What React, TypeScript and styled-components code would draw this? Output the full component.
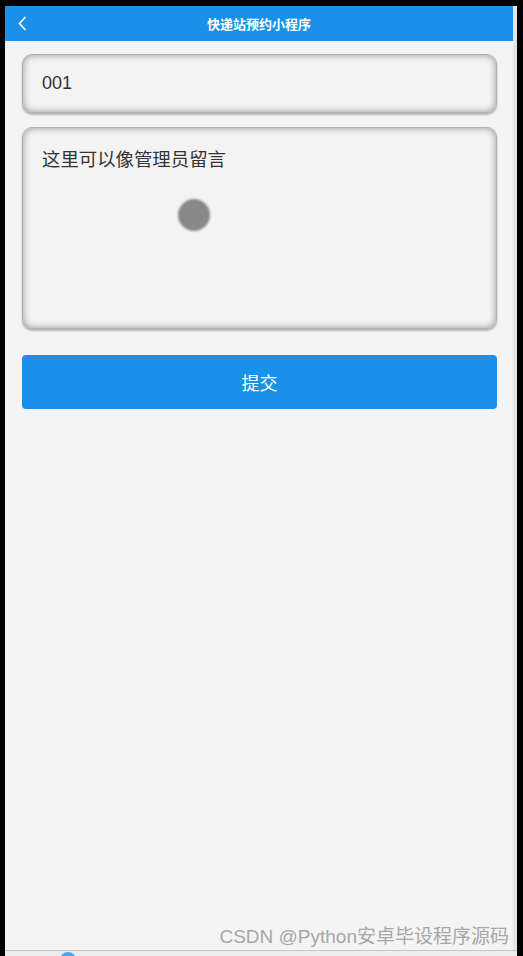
import React, { useState } from 'react'
import styled, { createGlobalStyle } from 'styled-components'

const GlobalStyle = createGlobalStyle`
    html, body {
        margin: 0;
        padding: 0;
        background: #000;
    }
    * {
        box-sizing: border-box;
    }
`

const Frame = styled.div`
    width: 523px;
    height: 956px;
    display: flex;
    flex-direction: column;
    padding: 6px 6px 0 5px;
    background: #000;
    font-family: "Liberation Sans", "Noto Sans CJK SC", sans-serif;
`

const Device = styled.div`
    flex: 1;
    display: flex;
    min-height: 0;
`

const Screen = styled.div`
    position: relative;
    flex: 1;
    display: flex;
    flex-direction: column;
    background: #f4f4f4;
`

const ScrollStrip = styled.div`
    width: 4px;
    background: #e4e4e4;
`

const Header = styled.div`
    height: 35px;
    display: flex;
    align-items: center;
    justify-content: center;
    position: relative;
    background: #1a91e8;
    color: #fff;
    font-size: 13px;
    font-weight: bold;
`

const BackButton = styled.button`
    position: absolute;
    left: 9px;
    top: 8px;
    width: 16px;
    height: 18px;
    padding: 0;
    border: none;
    background: transparent;
    display: flex;
    align-items: center;
    justify-content: center;
`

const Form = styled.form`
    display: flex;
    flex-direction: column;
    padding: 13px 16px 0 17px;
`

const Field = styled.div<{ $tall?: boolean }>`
    position: relative;
    height: ${p => (p.$tall ? '202px' : '59px')};
    margin-bottom: ${p => (p.$tall ? '26px' : '14px')};
    border: 1px solid #b0b0b0;
    border-radius: 10px;
    background: #f3f3f3;
    box-shadow: inset 0 0 7px rgba(0, 0, 0, 0.4), 0 2px 2px rgba(0, 0, 0, 0.25);
    display: flex;
`

const TextInput = styled.input`
    flex: 1;
    border: none;
    outline: none;
    background: transparent;
    padding: 0 19px;
    font-family: "Liberation Sans", sans-serif;
    font-size: 18px;
    color: #333;
`

const Message = styled.textarea`
    flex: 1;
    border: none;
    outline: none;
    resize: none;
    background: transparent;
    padding: 18px 19px;
    font-family: "Noto Sans CJK SC", sans-serif;
    font-size: 18.4px;
    line-height: 24px;
    color: #333;
`

const TouchDot = styled.div`
    position: absolute;
    left: 155px;
    top: 71px;
    width: 32px;
    height: 32px;
    border-radius: 50%;
    background: #888;
    filter: blur(1.2px);
    pointer-events: none;
`

const Submit = styled.button`
    height: 54px;
    border: none;
    border-radius: 4px;
    background: #1a91e8;
    color: #fff;
    font-family: "Noto Sans CJK SC", sans-serif;
    font-size: 18px;
`

const Watermark = styled.div`
    position: absolute;
    right: 4px;
    bottom: 2px;
    font-family: "Liberation Sans", "Noto Sans CJK SC", sans-serif;
    font-size: 19px;
    color: #a6a6a6;
    white-space: nowrap;
`

const Taskbar = styled.div`
    position: relative;
    height: 6px;
    border-top: 1px solid #c8c8c8;
    background: #ededed;
    overflow: hidden;
`

const TaskDot = styled.div`
    position: absolute;
    left: 55px;
    top: 1px;
    width: 16px;
    height: 16px;
    border-radius: 50%;
    background: #4aa3e6;
`

const App: React.FunctionComponent = () => {
    const [code, setCode] = useState('001')
    const [note, setNote] = useState('这里可以像管理员留言')

    const handleSubmit = (event: React.FormEvent<HTMLFormElement>) => {
        event.preventDefault()
    }

    return (
        <Frame>
            <GlobalStyle />
            <Device>
                <Screen>
                    <Header>
                        <BackButton type="button">
                            <svg width="9" height="15" viewBox="0 0 9 15">
                                <path d="M7.5 1 L1.5 7.5 L7.5 14" fill="none" stroke="#fff" strokeWidth="1.6" />
                            </svg>
                        </BackButton>
                        快递站预约小程序
                    </Header>
                    <Form onSubmit={handleSubmit}>
                        <Field>
                            <TextInput value={code} onChange={e => setCode(e.target.value)} />
                        </Field>
                        <Field $tall>
                            <Message value={note} onChange={e => setNote(e.target.value)} />
                            <TouchDot />
                        </Field>
                        <Submit type="submit">提交</Submit>
                    </Form>
                    <Watermark>CSDN @Python安卓毕设程序源码</Watermark>
                </Screen>
                <ScrollStrip />
            </Device>
            <Taskbar>
                <TaskDot />
            </Taskbar>
        </Frame>
    )
}

export default App
